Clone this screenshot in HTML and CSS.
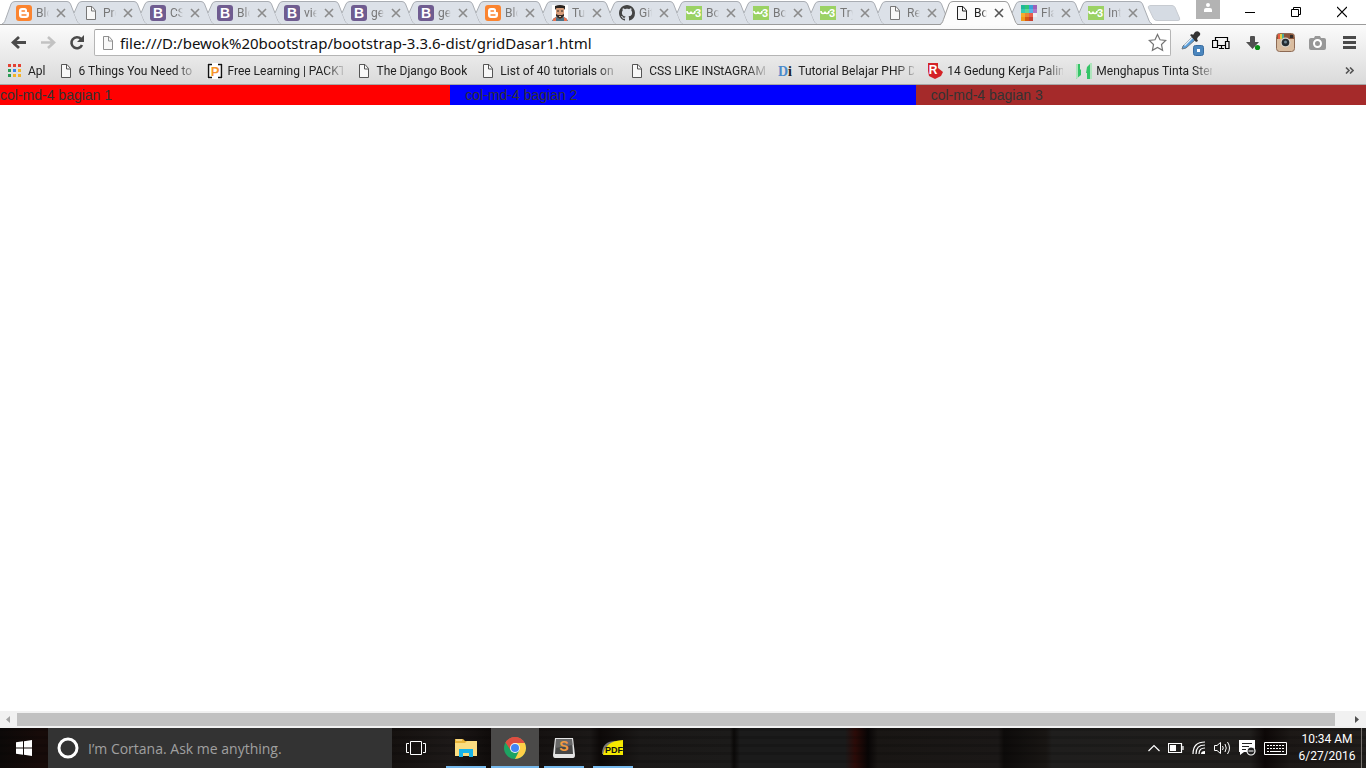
FILE: index.html
```html
<!DOCTYPE html>
<html lang="id">
<head>
    <meta charset="utf-8">
    <title>Bootstrap Grid Dasar</title>
    <link rel="stylesheet" href="styles.css">
</head>
<body>

<!-- shared icons -->
<svg class="sprite" aria-hidden="true">
    <symbol id="tab-first" viewBox="0 0 78 24">
        <path d="M0 24 C3 23 3 20 4 18 L9 4 Q10 1.5 13 1.5 H65 Q67.500 1.5 68.500 4 L74 18 C75 21 76 23 78 24Z" fill="#dce1e8"/>
        <path d="M0 24 C3 23 3 20 4 18 L9 4 Q10 1.5 13 1.5 H65 Q67.500 1.5 68.500 4 L74 18 C75 21 76 23 78 24" fill="none" stroke="#a9adb3"/>
    </symbol>
    <symbol id="tab" viewBox="0 0 78 24">
        <path d="M11 24 Q8.500 22.500 7 18 L5 13 L9 4 Q10 1.5 13 1.5 H65 Q67.500 1.5 68.500 4 L74 18 C75 21 76 23 78 24Z" fill="#dce1e8"/>
        <path d="M5 13 L9 4 Q10 1.5 13 1.5 H65 Q67.500 1.5 68.500 4 L74 18 C75 21 76 23 78 24" fill="none" stroke="#a9adb3"/>
    </symbol>
    <symbol id="tab-active" viewBox="0 0 78 25">
        <path d="M0 25 C3 24 3 20 4 18 L9 4 Q10 1.5 13 1.5 H65 Q67.500 1.5 68.500 4 L74 18 C75 21 76 24 78 25Z" fill="#fcfcfc"/>
        <path d="M0 24.500 C3 23 3 20 4 18 L9 4 Q10 1.5 13 1.5 H65 Q67.500 1.5 68.500 4 L74 18 C75 21 76 24 78 24.500" fill="none" stroke="#9b9b9b"/>
    </symbol>
    <symbol id="close" viewBox="0 0 10 10">
        <path d="M1 1 L9 9 M9 1 L1 9" stroke="currentColor" stroke-width="1.600"/>
    </symbol>
    <symbol id="blogger" viewBox="0 0 16 16">
        <rect width="16" height="16" rx="3" fill="#fb8430"/>
        <path d="M6 3 H8.500 Q11 3 11 5.500 V6.500 Q11 7 11.500 7 H12 Q13 7 13 8 V10 Q13 13 10 13 H6 Q3 13 3 10 V6 Q3 3 6 3Z" fill="#fff"/>
        <path d="M6 6 H8.500 M6 10 H10" stroke="#fb8430" stroke-width="1.400" stroke-linecap="round"/>
    </symbol>
    <symbol id="page" viewBox="0 0 16 16">
        <path d="M3.500 1.500 H9 L12.500 5.500 V14.500 H3.500Z" fill="#f8f8f8" stroke="currentColor"/>
        <path d="M8.500 1.500 V6 H12.500" fill="none" stroke="currentColor"/>
    </symbol>
    <symbol id="bootstrap" viewBox="0 0 16 16">
        <rect width="16" height="16" rx="3" fill="#6f5c90"/>
        <text x="8" y="13" class="mark" font-size="14" fill="#fff">B</text>
    </symbol>
    <symbol id="person" viewBox="0 0 16 16">
        <rect width="16" height="16" fill="#fff"/>
        <path d="M0 16 Q1 12.500 5 12 L8 14 L11 12 Q15 12.500 16 16Z" fill="#4d7285"/>
        <path d="M1 14 L4 12 V16 H1Z M12 12 L15 14 V16 H12Z" fill="#e77152"/>
        <path d="M4 3 H12 V9 Q12 13 8 14 Q4 13 4 9Z" fill="#d69b78"/>
        <path d="M3 5 V1 Q8 -1 13 1 V5 L11.500 3 H4.500Z" fill="#28231f"/>
        <path d="M4 9 L6 10 H10 L12 9 V11 Q10 14 8 14 Q6 14 4 11Z" fill="#332a26"/>
        <path d="M5 6 H7 M9 6 H11" stroke="#262626"/>
        <path d="M7 11.500 H9" stroke="#e8c1aa"/>
    </symbol>
    <symbol id="github" viewBox="0 0 16 16">
        <path fill="#444" fill-rule="evenodd" d="M8 0C3.580 0 0 3.580 0 8c0 3.540 2.290 6.530 5.470 7.590.4.070.55-.17.55-.38 0-.19-.01-.82-.01-1.490-2.010.37-2.530-.49-2.690-.94-.09-.23-.48-.94-.82-1.130-.28-.15-.68-.52-.01-.53.63-.01 1.080.58 1.230.82.72 1.210 1.870.87 2.330.66.070-.52.28-.87.51-1.070-1.780-.2-3.640-.89-3.640-3.950 0-.87.31-1.590.82-2.150-.08-.2-.36-1.020.08-2.120 0 0 .67-.21 2.200.82.64-.18 1.320-.27 2-.27s1.360.09 2 .27c1.530-1.040 2.200-.82 2.200-.82.44 1.100.16 1.920.08 2.120.51.56.82 1.270.82 2.150 0 3.070-1.870 3.750-3.650 3.950.29.25.54.73.54 1.480 0 1.070-.01 1.930-.01 2.200 0 .21.15.46.55.38A8.010 8.010 0 0 0 16 8c0-4.420-3.580-8-8-8z"/>
    </symbol>
    <symbol id="w3" viewBox="0 0 16 16">
        <rect y="1" width="16" height="14" fill="#9bd264"/>
        <path d="M1 6 Q1 8.500 3 8.500 Q5 8.500 5 6.500 Q5 8.500 7 8.500 Q9 8.500 9 6" fill="none" stroke="#fff" stroke-width="1.600"/>
        <text x="12" y="12" class="mark" font-size="11" fill="#fff">3</text>
    </symbol>
    <symbol id="flat" viewBox="0 0 16 16">
        <path d="M0 0H4V4H0Z" fill="#1fb89a"/><path d="M4 0H8V4H4Z" fill="#2fc578"/>
        <path d="M8 0H12V4H8Z" fill="#3aa0d8"/><path d="M12 0H16V4H12Z" fill="#9b5fb9"/>
        <path d="M0 4H4V8H0Z" fill="#37ccb5"/><path d="M4 4H8V8H4Z" fill="#5ed697"/>
        <path d="M8 4H12V8H8Z" fill="#58b3e6"/><path d="M12 4H16V8H12Z" fill="#ad77c7"/>
        <path d="M0 8H4V12H0Z" fill="#f4ac2c"/><path d="M4 8H8V12H4Z" fill="#e98536"/>
        <path d="M8 8H12V12H8Z" fill="#e9604f"/><path d="M12 8H16V12H12Z" fill="#edf0f1"/>
        <path d="M0 12H4V16H0Z" fill="#f0991b"/><path d="M4 12H8V16H4Z" fill="#d65a15"/>
        <path d="M8 12H12V16H8Z" fill="#c84031"/>
    </symbol>
</svg>

<header class="browser">
    <div class="tab-strip">
        <div class="tab"><svg class="tab-shape"><use href="#tab-first"/></svg><svg class="favicon"><use href="#blogger"/></svg><a class="tab-title" href="#">Blo</a><button class="tab-close" aria-label="Close"><svg><use href="#close"/></svg></button></div>
        <div class="tab"><svg class="tab-shape"><use href="#tab"/></svg><svg class="favicon"><use href="#page"/></svg><a class="tab-title" href="#">Pro</a><button class="tab-close" aria-label="Close"><svg><use href="#close"/></svg></button></div>
        <div class="tab"><svg class="tab-shape"><use href="#tab"/></svg><svg class="favicon"><use href="#bootstrap"/></svg><a class="tab-title" href="#">CS</a><button class="tab-close" aria-label="Close"><svg><use href="#close"/></svg></button></div>
        <div class="tab"><svg class="tab-shape"><use href="#tab"/></svg><svg class="favicon"><use href="#bootstrap"/></svg><a class="tab-title" href="#">Blo</a><button class="tab-close" aria-label="Close"><svg><use href="#close"/></svg></button></div>
        <div class="tab"><svg class="tab-shape"><use href="#tab"/></svg><svg class="favicon"><use href="#bootstrap"/></svg><a class="tab-title" href="#">vie</a><button class="tab-close" aria-label="Close"><svg><use href="#close"/></svg></button></div>
        <div class="tab"><svg class="tab-shape"><use href="#tab"/></svg><svg class="favicon"><use href="#bootstrap"/></svg><a class="tab-title" href="#">ge</a><button class="tab-close" aria-label="Close"><svg><use href="#close"/></svg></button></div>
        <div class="tab"><svg class="tab-shape"><use href="#tab"/></svg><svg class="favicon"><use href="#bootstrap"/></svg><a class="tab-title" href="#">ge</a><button class="tab-close" aria-label="Close"><svg><use href="#close"/></svg></button></div>
        <div class="tab"><svg class="tab-shape"><use href="#tab"/></svg><svg class="favicon"><use href="#blogger"/></svg><a class="tab-title" href="#">Blo</a><button class="tab-close" aria-label="Close"><svg><use href="#close"/></svg></button></div>
        <div class="tab"><svg class="tab-shape"><use href="#tab"/></svg><svg class="favicon"><use href="#person"/></svg><a class="tab-title" href="#">Tu</a><button class="tab-close" aria-label="Close"><svg><use href="#close"/></svg></button></div>
        <div class="tab"><svg class="tab-shape"><use href="#tab"/></svg><svg class="favicon"><use href="#github"/></svg><a class="tab-title" href="#">Git</a><button class="tab-close" aria-label="Close"><svg><use href="#close"/></svg></button></div>
        <div class="tab"><svg class="tab-shape"><use href="#tab"/></svg><svg class="favicon"><use href="#w3"/></svg><a class="tab-title" href="#">Bo</a><button class="tab-close" aria-label="Close"><svg><use href="#close"/></svg></button></div>
        <div class="tab"><svg class="tab-shape"><use href="#tab"/></svg><svg class="favicon"><use href="#w3"/></svg><a class="tab-title" href="#">Bo</a><button class="tab-close" aria-label="Close"><svg><use href="#close"/></svg></button></div>
        <div class="tab"><svg class="tab-shape"><use href="#tab"/></svg><svg class="favicon"><use href="#w3"/></svg><a class="tab-title" href="#">Try</a><button class="tab-close" aria-label="Close"><svg><use href="#close"/></svg></button></div>
        <div class="tab"><svg class="tab-shape"><use href="#tab"/></svg><svg class="favicon"><use href="#page"/></svg><a class="tab-title" href="#">Re</a><button class="tab-close" aria-label="Close"><svg><use href="#close"/></svg></button></div>
        <div class="tab active"><svg class="tab-shape"><use href="#tab-active"/></svg><svg class="favicon"><use href="#page"/></svg><a class="tab-title" href="#">Bo</a><button class="tab-close" aria-label="Close"><svg><use href="#close"/></svg></button></div>
        <div class="tab"><svg class="tab-shape"><use href="#tab"/></svg><svg class="favicon"><use href="#flat"/></svg><a class="tab-title" href="#">Fla</a><button class="tab-close" aria-label="Close"><svg><use href="#close"/></svg></button></div>
        <div class="tab"><svg class="tab-shape"><use href="#tab"/></svg><svg class="favicon"><use href="#w3"/></svg><a class="tab-title" href="#">Int</a><button class="tab-close" aria-label="Close"><svg><use href="#close"/></svg></button></div>
        <button class="new-tab" aria-label="New tab">
            <svg width="34" height="17" viewBox="0 0 34 17"><path d="M4 .5 H25 Q27 .5 28 2.500 L32.500 13 Q33.500 15.500 31 15.500 H10 Q7.500 15.500 6.500 13.500 L1.500 3 Q.5 .5 4 .5Z" fill="#d5dbe3" stroke="#c7cbd1"/></svg>
        </button>
        <div class="window-buttons">
            <button class="user" aria-label="User"><svg width="24" height="19" viewBox="0 0 24 19"><rect width="24" height="19" fill="#b3b3b3"/><circle cx="12" cy="5" r="2" fill="#fff"/><path d="M8 12 V10 Q8 8 10 8 H14 Q16 8 16 10 V12Z" fill="#fff"/></svg></button>
            <button aria-label="Minimize"><svg width="10" height="24" viewBox="0 0 10 24"><path d="M0 12.500 H10" stroke="#000"/></svg></button>
            <button aria-label="Restore"><svg width="10" height="24" viewBox="0 0 10 24"><path d="M.5 9.500 H7.500 V16.500 H.5Z M2.500 9.500 V7.500 H9.500 V14.500 H7.500" fill="none" stroke="#000"/></svg></button>
            <button aria-label="Close window"><svg width="10" height="24" viewBox="0 0 10 24"><path d="M0 7 L10 17 M10 7 L0 17" stroke="#000" stroke-width="1.200"/></svg></button>
        </div>
    </div>

    <div class="chrome-bars">
        <div class="toolbar">
            <button class="nav-button" aria-label="Back"><svg width="16" height="16" viewBox="0 0 16 16"><path d="M8 2 L2 7.500 L8 13 M2 7.500 H15" fill="none" stroke="#4a4a4a" stroke-width="2.800"/></svg></button>
            <button class="nav-button" aria-label="Forward"><svg width="16" height="16" viewBox="0 0 16 16"><path d="M8 2 L14 7.500 L8 13 M14 7.500 H1" fill="none" stroke="#c2c2c2" stroke-width="2.600"/></svg></button>
            <button class="nav-button" aria-label="Reload"><svg width="16" height="16" viewBox="0 0 16 16"><path d="M12 4 A5.500 5.500 0 1 0 13 10" fill="none" stroke="#4a4a4a" stroke-width="2.600"/><path d="M15 0 V7 H8Z" fill="#4a4a4a"/></svg></button>
            <div class="omnibox">
                <svg class="omni-page"><use href="#page"/></svg>
                <input type="text" aria-label="Address" value="file:///D:/bewok%20bootstrap/bootstrap-3.3.6-dist/gridDasar1.html">
                <button aria-label="Bookmark this page"><svg width="19" height="19" viewBox="0 0 19 19"><path d="M9.500 1.500 L12 6.800 L17.700 7.500 L13.500 11.500 L14.600 17.300 L9.500 14.500 L4.400 17.300 L5.500 11.500 L1.300 7.500 L7 6.800Z" fill="#fff" stroke="#747474" stroke-width="1.200"/></svg></button>
            </div>
            <div class="extensions">
                <button class="picker" aria-label="Color picker"><svg width="24" height="26" viewBox="0 0 24 26"><path d="M1 19 L2 16 L11 7 L14 10 L5 18Z" fill="#5a9fdc" stroke="#6a7885"/><path d="M3 15 L11 7 L12 8 L4 16Z" fill="#e4eef6"/><path d="M9 5 L11 4 L12 5 L14 2 Q17 0 19 3 Q20 5 17 7 L16 9 L17 11 L15 12Z" fill="#333"/><rect x="12.500" y="15.500" width="10" height="10" rx="2" fill="#4b86be" stroke="#386ca0"/><rect x="16" y="19" width="3" height="3" fill="#fff"/></svg></button>
                <button aria-label="Responsive view"><svg width="18" height="14" viewBox="0 0 18 14"><path d="M3.500 4 V1.500 H15.500 V5 M6 9.500 H13 M.5 4.500 H5.500 V11.500 H.5Z M13.500 5.500 H17 V12.500 H13.500Z M9.500 9.500 V12.500 M7 12.500 H12" fill="none" stroke="#000" stroke-width="1.200"/></svg></button>
                <button aria-label="Downloads"><svg width="16" height="16" viewBox="0 0 16 16"><path d="M5 2 Q5 1 6 1 H9 Q10 1 10 2 V7 H14 L7.500 14 L1 7 H5Z" fill="#505050"/><circle cx="12.500" cy="12.500" r="2.600" fill="#0c8d17"/></svg></button>
                <button aria-label="Instagram"><svg width="19" height="19" viewBox="0 0 19 19"><rect x=".5" y=".5" width="18" height="18" rx="3" fill="#d9bc9f" stroke="#8d6a54"/><path d="M1 6 V3 Q1 1 3 1 H16 Q18 1 18 3 V6Z" fill="#8a5439"/><path d="M2 1 H4 V6 H2Z" fill="#e95b41"/><path d="M4 1 H6 V6 H4Z" fill="#e8cf3e"/><path d="M6 1 H8 V6 H6Z" fill="#4cac99"/><rect x="14" y="2" width="3" height="3" fill="#332b27"/><circle cx="9.500" cy="9.500" r="5" fill="#dad3c9"/><circle cx="9.500" cy="9.500" r="3.800" fill="#252c32"/><circle cx="9.500" cy="9" r="1.500" fill="#708694"/></svg></button>
                <button aria-label="Screenshot"><svg width="17" height="16" viewBox="0 0 17 16"><path d="M2 3 H5 L6 1 H11 L12 3 H15 Q17 3 17 5 V13 Q17 15 15 15 H2 Q0 15 0 13 V5 Q0 3 2 3Z" fill="#979797"/><circle cx="8.500" cy="8.500" r="3.500" fill="none" stroke="#fff" stroke-width="2"/></svg></button>
                <button aria-label="Menu"><svg width="13" height="13" viewBox="0 0 13 13"><path d="M0 1.500 H13 M0 6.500 H13 M0 11.500 H13" stroke="#4a4a4a" stroke-width="3"/></svg></button>
            </div>
        </div>

        <nav class="bookmarks">
            <a href="#"><svg class="bm-icon" viewBox="0 0 16 16"><path d="M0 1H3V4H0Z M5 1H8V4H5Z M10 1H13V4H10Z" fill="#e34133"/><path d="M0 6H3V9H0Z" fill="#2b9b55"/><path d="M5 6H8V9H5Z" fill="#3b82ec"/><path d="M10 6H13V9H10Z M10 11H13V14H10Z M5 11H8V14H5Z" fill="#f3b329"/><path d="M0 11H3V14H0Z" fill="#2b9b55"/></svg><span>Apl</span></a>
            <a href="#"><svg class="bm-icon"><use href="#page"/></svg><span>6 Things You Need to K</span></a>
            <a href="#"><svg class="bm-icon" viewBox="0 0 16 16"><rect width="16" height="16" fill="#fff"/><path d="M5 1.500 H1.500 V14.500 H5 M11 1.500 H14.500 V14.500 H11" fill="none" stroke="#111" stroke-width="1.500"/><text x="8" y="13" class="mark" font-size="13" fill="#f5942c">P</text></svg><span>Free Learning | PACKT</span></a>
            <a href="#"><svg class="bm-icon"><use href="#page"/></svg><span>The Django Book</span></a>
            <a href="#"><svg class="bm-icon"><use href="#page"/></svg><span>List of 40 tutorials on D</span></a>
            <a href="#"><svg class="bm-icon"><use href="#page"/></svg><span>CSS LIKE INStAGRAM</span></a>
            <a href="#"><svg class="bm-icon" viewBox="0 0 16 16"><text x="5" y="13" class="serif-mark" font-size="14" fill="#4a8acb">D</text><text x="12" y="13" class="serif-mark" font-size="14" fill="#222">i</text></svg><span>Tutorial Belajar PHP D</span></a>
            <a href="#"><svg class="bm-icon" viewBox="0 0 16 16"><path d="M1 0 H11 V5 L16 9 L14 13 L8 16 L2 13 L1 8Z" fill="#d42226"/><text x="6" y="11" class="mark" font-size="12" fill="#fff">R</text></svg><span>14 Gedung Kerja Paling</span></a>
            <a href="#"><svg class="bm-icon" viewBox="0 0 16 16"><path d="M0 1 H4 V7 L5 6 V12 L0 16Z M11 4 L15 0 V16 H11 V10 H10Z" fill="#35c467"/><path d="M0 1 H2 V15 L0 16Z M14 0 H16 V16 H14Z" fill="#afe5bd"/></svg><span>Menghapus Tinta Stem</span></a>
            <button class="more" aria-label="More bookmarks"><svg width="9" height="7" viewBox="0 0 9 7"><path d="M1 .5 L4 3.500 L1 6.500 M5 .5 L8 3.500 L5 6.500" fill="none" stroke="#555" stroke-width="1.600"/></svg></button>
        </nav>
    </div>
</header>

<main class="page">
    <div class="row">
        <div class="col-md-4 red">col-md-4 bagian 1</div>
        <div class="col-md-4 blue">col-md-4 bagian 2</div>
        <div class="col-md-4 brown">col-md-4 bagian 3</div>
    </div>
</main>

<div class="scrollbar">
    <button aria-label="Scroll left"><svg width="17" height="17" viewBox="0 0 17 17"><path d="M10 5 V12 L6 8.500Z" fill="#a3a3a3"/></svg></button>
    <div class="thumb"></div>
    <button class="scroll-right" aria-label="Scroll right"><svg width="17" height="17" viewBox="0 0 17 17"><path d="M7 5 V12 L11 8.500Z" fill="#505050"/></svg></button>
</div>

<footer class="taskbar">
    <button class="start" aria-label="Start"><svg width="16" height="16" viewBox="0 0 16 16"><path d="M0 2.300 L7 1.300 V7.500 H0Z M8 1.200 L16 0 V7.500 H8Z M0 8.500 H7 V14.700 L0 13.700Z M8 8.500 H16 V16 L8 14.800Z" fill="#fff"/></svg></button>
    <label class="cortana">
        <svg width="22" height="22" viewBox="0 0 22 22"><circle cx="11" cy="11" r="9" fill="none" stroke="#fff" stroke-width="3"/></svg>
        <input type="text" aria-label="Search" placeholder="I’m Cortana. Ask me anything.">
    </label>
    <button class="task-view" aria-label="Task view"><svg width="20" height="14" viewBox="0 0 20 14"><path d="M4.500 .5 H15.500 V13.500 H4.500Z M3 2.500 H.5 V11.500 H3 M17 2.500 H19.500 V11.500 H17" fill="none" stroke="#fff"/></svg></button>
    <button class="app" aria-label="File Explorer"><svg width="22" height="20" viewBox="0 0 22 20"><path d="M0 1 H8 L10 3 H22 V18 H0Z" fill="#e9b53a"/><path d="M0 5 H10 L12 3 H22 V18 H0Z" fill="#fbdd80"/><path d="M1 2 H7" stroke="#fff3c4"/><path d="M4 19 V11 H18 V19 H14 V15 H8 V19Z" fill="#18b4e8"/></svg></button>
    <button class="app current" aria-label="Chrome"><svg width="22" height="22" viewBox="0 0 22 22"><circle cx="11" cy="11" r="11" fill="#1da362"/><path d="M11 11 L1.500 5.500 A11 11 0 0 1 20.500 5.500Z" fill="#dd4e41"/><path d="M11 6 H20.800 A11 11 0 0 1 11 22 L15.500 13Z" fill="#ffcf48"/><path d="M1.500 5.500 L6.500 13 L11 11 V6 H20.800 Q17 0 11 0 Q5 0 1.500 5.500" fill="#dd4e41"/><circle cx="11" cy="11" r="5" fill="#f4f4f4"/><circle cx="11" cy="11" r="4" fill="#4285f4"/></svg></button>
    <button class="app" aria-label="Sublime Text"><svg width="22" height="20" viewBox="0 0 22 20"><path d="M2 0 H20 L22 17 Q22 20 20 20 H2 Q0 20 0 17Z" fill="#e5e5e5"/><path d="M3 1 H19 L20 16 H2Z" fill="#484848"/><path d="M3 1 H19 L19.500 7 L2.500 10Z" fill="#686868"/><text x="11" y="13" class="mark" font-size="14" fill="#f29a3f">S</text></svg></button>
    <button class="app pdf" aria-label="PDF reader"><svg width="22" height="16" viewBox="0 0 22 16"><path d="M0 14 Q0 1 14 1 L3 14Z" fill="#777"/><path d="M1 15 Q3 1 21 0 V15Z" fill="#f5e800"/><text x="12" y="13" class="mark" font-size="9" fill="#111">PDF</text></svg></button>
    <div class="tray">
        <button aria-label="Show hidden icons"><svg width="12" height="8" viewBox="0 0 12 8"><path d="M.5 7 L6 1.500 L11.500 7" fill="none" stroke="#fff" stroke-width="1.200"/></svg></button>
        <button aria-label="Battery"><svg width="16" height="10" viewBox="0 0 16 10"><path d="M.5 .5 H13.500 V9.500 H.5Z M15 3 V7" fill="none" stroke="#fff" stroke-width="1.200"/><rect x="2" y="2" width="6" height="6" fill="#fff"/></svg></button>
        <button aria-label="Wi-Fi"><svg width="14" height="14" viewBox="0 0 14 14"><path d="M1 13 Q1 1 13 1 M4 13 Q4 4 13 4 M7 13 Q7 7 13 7" fill="none" stroke="#fff" stroke-width="1.200"/><path d="M9 13 Q9 10 13 10 V13Z" fill="#fff"/></svg></button>
        <button aria-label="Volume"><svg width="17" height="14" viewBox="0 0 17 14"><path d="M.5 4.500 H3 L6.500 1.500 V12.500 L3 9.500 H.5Z M8.500 5 Q10 7 8.500 9 M11 3 Q13.500 7 11 11 M13.500 1 Q17.500 7 13.500 13" fill="none" stroke="#fff"/></svg></button>
        <button aria-label="Notifications"><svg width="17" height="16" viewBox="0 0 17 16"><path d="M0 0 H16 V12 H5 L1 15 V12 H0Z" fill="#fff"/><path d="M3 3.500 H13 M3 6.500 H10 M3 9.500 H7" stroke="#222"/><circle cx="12" cy="11" r="4" fill="#222" stroke="#fff" stroke-width="1.200"/><path d="M9.500 11 H14.500" stroke="#fff"/></svg></button>
        <button aria-label="Keyboard"><svg width="23" height="13" viewBox="0 0 23 13"><path d="M.5 .5 H22.500 V12.500 H.5Z" fill="none" stroke="#fff"/><path d="M3 3.500 H20 M3 6.500 H20" stroke="#fff" stroke-dasharray="2 1"/><path d="M3 9.500 H5 M6 9.500 H17 M18 9.500 H20" stroke="#fff"/></svg></button>
        <div class="clock"><time>10:34 AM</time><time>6/27/2016</time></div>
        <button class="show-desktop" aria-label="Show desktop"></button>
    </div>
</footer>

</body>
</html>
```

FILE: styles.css
```css
* {
    box-sizing: border-box;
}

body {
    margin: 0;
    height: 100vh;
    display: flex;
    flex-direction: column;
    overflow: hidden;
    background: #fff;
    font-family: "Noto Sans", "Open Sans", sans-serif;
    font-size: 12px;
}

button {
    display: flex;
    align-items: center;
    justify-content: center;
    padding: 0;
    border: none;
    background: none;
    flex-shrink: 0;
}

input {
    border: none;
    background: none;
    outline: none;
    padding: 0;
    min-width: 0;
    flex: 1;
    font-family: inherit;
}

a {
    color: inherit;
    text-decoration: none;
}

svg {
    display: block;
    flex-shrink: 0;
}

.sprite {
    display: none;
}

.mark {
    font-family: "Liberation Sans", Arial, sans-serif;
    font-weight: bold;
    text-anchor: middle;
}

.serif-mark {
    font-family: "Liberation Serif", serif;
    font-weight: bold;
    text-anchor: middle;
}

/* tabs */
.tab-strip {
    display: flex;
    height: 24px;
    padding-left: 2px;
    font-family: Roboto, sans-serif;
}

.tab {
    position: relative;
    display: flex;
    align-items: center;
    width: 78px;
    height: 24px;
    margin-right: -11px;
    padding: 2px 0 0 14px;
    flex-shrink: 0;
    color: #777;
}

.tab-shape {
    position: absolute;
    top: 0;
    left: 0;
    width: 78px;
    height: 24px;
}

.favicon {
    position: relative;
    width: 16px;
    height: 16px;
}

.tab-title {
    position: relative;
    width: 13px;
    margin-left: 4px;
    overflow: hidden;
    white-space: nowrap;
    -webkit-mask-image: linear-gradient(to right, #000 60%, transparent);
    mask-image: linear-gradient(to right, #000 60%, transparent);
}

.tab-close {
    position: relative;
    margin-left: 7px;
    color: #8b8b8b;
}

.tab-close svg {
    width: 10px;
    height: 10px;
}

.tab.active {
    z-index: 1;
    color: #222;
}

.active .tab-shape {
    height: 25px;
}

.active .tab-close {
    color: #555;
}

.new-tab {
    align-items: flex-start;
    margin-left: 16px;
    margin-left: 6px;
    padding-top: 5px;
}

.window-buttons {
    display: flex;
    align-items: flex-start;
    margin-left: auto;
    padding-right: 19px;
    gap: 36px;
}

.window-buttons .user {
    margin-right: -11px;
}

/* toolbar and bookmarks */
.chrome-bars {
    background: linear-gradient(#fbfbfb, #dadada);
    border-top: 1px solid #9b9b9b;
    border-bottom: 1px solid #a6a6a6;
}

.toolbar {
    display: flex;
    align-items: center;
    height: 32px;
    padding: 4px 1px 1px 4px;
}

.nav-button {
    width: 29px;
}

.omnibox {
    display: flex;
    align-items: center;
    flex: 1;
    height: 27px;
    margin-left: 3px;
    padding: 0 3px 0 5px;
    background: #fff;
    border: 1px solid #b5b5b5;
    border-top-color: #999;
    border-radius: 2px;
}

.omni-page {
    width: 16px;
    height: 16px;
    margin-right: 4px;
    color: #8f8f8f;
}

.omnibox input {
    font-size: 15px;
    color: #111;
}

.extensions {
    display: flex;
    align-items: center;
    margin-left: 2px;
}

.extensions button {
    width: 32px;
    height: 26px;
}

.extensions .picker {
    justify-content: flex-end;
}

.bookmarks {
    display: flex;
    align-items: center;
    gap: 13px;
    height: 27px;
    padding: 0 12px 0 8px;
    font-family: Roboto, sans-serif;
    color: #222;
}

.bookmarks a {
    display: flex;
    align-items: center;
    gap: 4px;
}

.bookmarks span {
    max-width: 116px;
    overflow: hidden;
    white-space: nowrap;
    -webkit-mask-image: linear-gradient(to right, #000 98px, transparent 120px);
    mask-image: linear-gradient(to right, #000 98px, transparent 120px);
}

.bm-icon {
    width: 16px;
    height: 16px;
    color: #555;
}

.more {
    margin-left: auto;
}

/* page content */
.page {
    flex: 1;
    overflow: hidden;
    font-family: "Liberation Sans", Arial, sans-serif;
    font-size: 14px;
    line-height: 20px;
    color: #333;
}

.row {
    display: flex;
    margin: 0 -15px;
}

.col-md-4 {
    flex: 1;
    padding: 0 15px;
}

.red {
    background: red;
}

.blue {
    background: blue;
}

.brown {
    background: brown;
}

.scrollbar {
    display: flex;
    height: 17px;
    padding-right: 1px;
    background: #f1f1f1;
}

.thumb {
    flex: 1;
    margin: 2px 0;
    background: #c1c1c1;
}

.scroll-right {
    margin-left: 13px;
}

/* taskbar */
.taskbar {
    display: flex;
    height: 40px;
    color: #fff;
    background:
        repeating-linear-gradient(rgba(0, 0, 0, 0.15) 0 3px, transparent 3px 8px),
        linear-gradient(to right, #0c0908 0, #170b09 40px, #15110f 392px, #1d1918 450px, #100c0b 490px, #1b1817 590px, #0d0908 600px, #1b1918 640px, #1c1b1a 730px, #0b0908 734px, #1b1b1b 740px, #1b1b1b 845px, #2c0b08 855px, #080505 868px, #191614 878px, #1b1817 998px, #0d0b0a 1004px, #191614 1046px, #1f1e1d 1052px, #211f1d 1250px, #0d0807 1265px, #1c1816 1290px, #211e1c 100%);
}

.start {
    width: 48px;
}

.cortana {
    display: flex;
    align-items: center;
    gap: 9px;
    width: 344px;
    padding-left: 9px;
    background: #333;
}

.cortana input {
    font-family: "Open Sans", sans-serif;
    font-size: 14px;
    color: #fff;
}

.cortana input::placeholder {
    color: #a0a0a0;
    opacity: 1;
}

.task-view {
    width: 48px;
    margin-right: 6px;
}

.app {
    width: 40px;
    margin-right: 5px;
    padding-top: 2px;
    border-bottom: 2px solid #76b9ed;
}

.app.current {
    width: 48px;
    background: #4b4a49;
}

.app.pdf {
    margin-left: 4px;
}

.tray {
    display: flex;
    align-items: center;
    gap: 8px;
    margin-left: auto;
}

.clock {
    display: flex;
    flex-direction: column;
    align-items: center;
    width: 52px;
    margin-left: 6px;
    line-height: 17px;
    font-family: Roboto, sans-serif;
    font-size: 12px;
}

.show-desktop {
    width: 5px;
    height: 40px;
    border-left: 1px solid #77726e;
}
```
